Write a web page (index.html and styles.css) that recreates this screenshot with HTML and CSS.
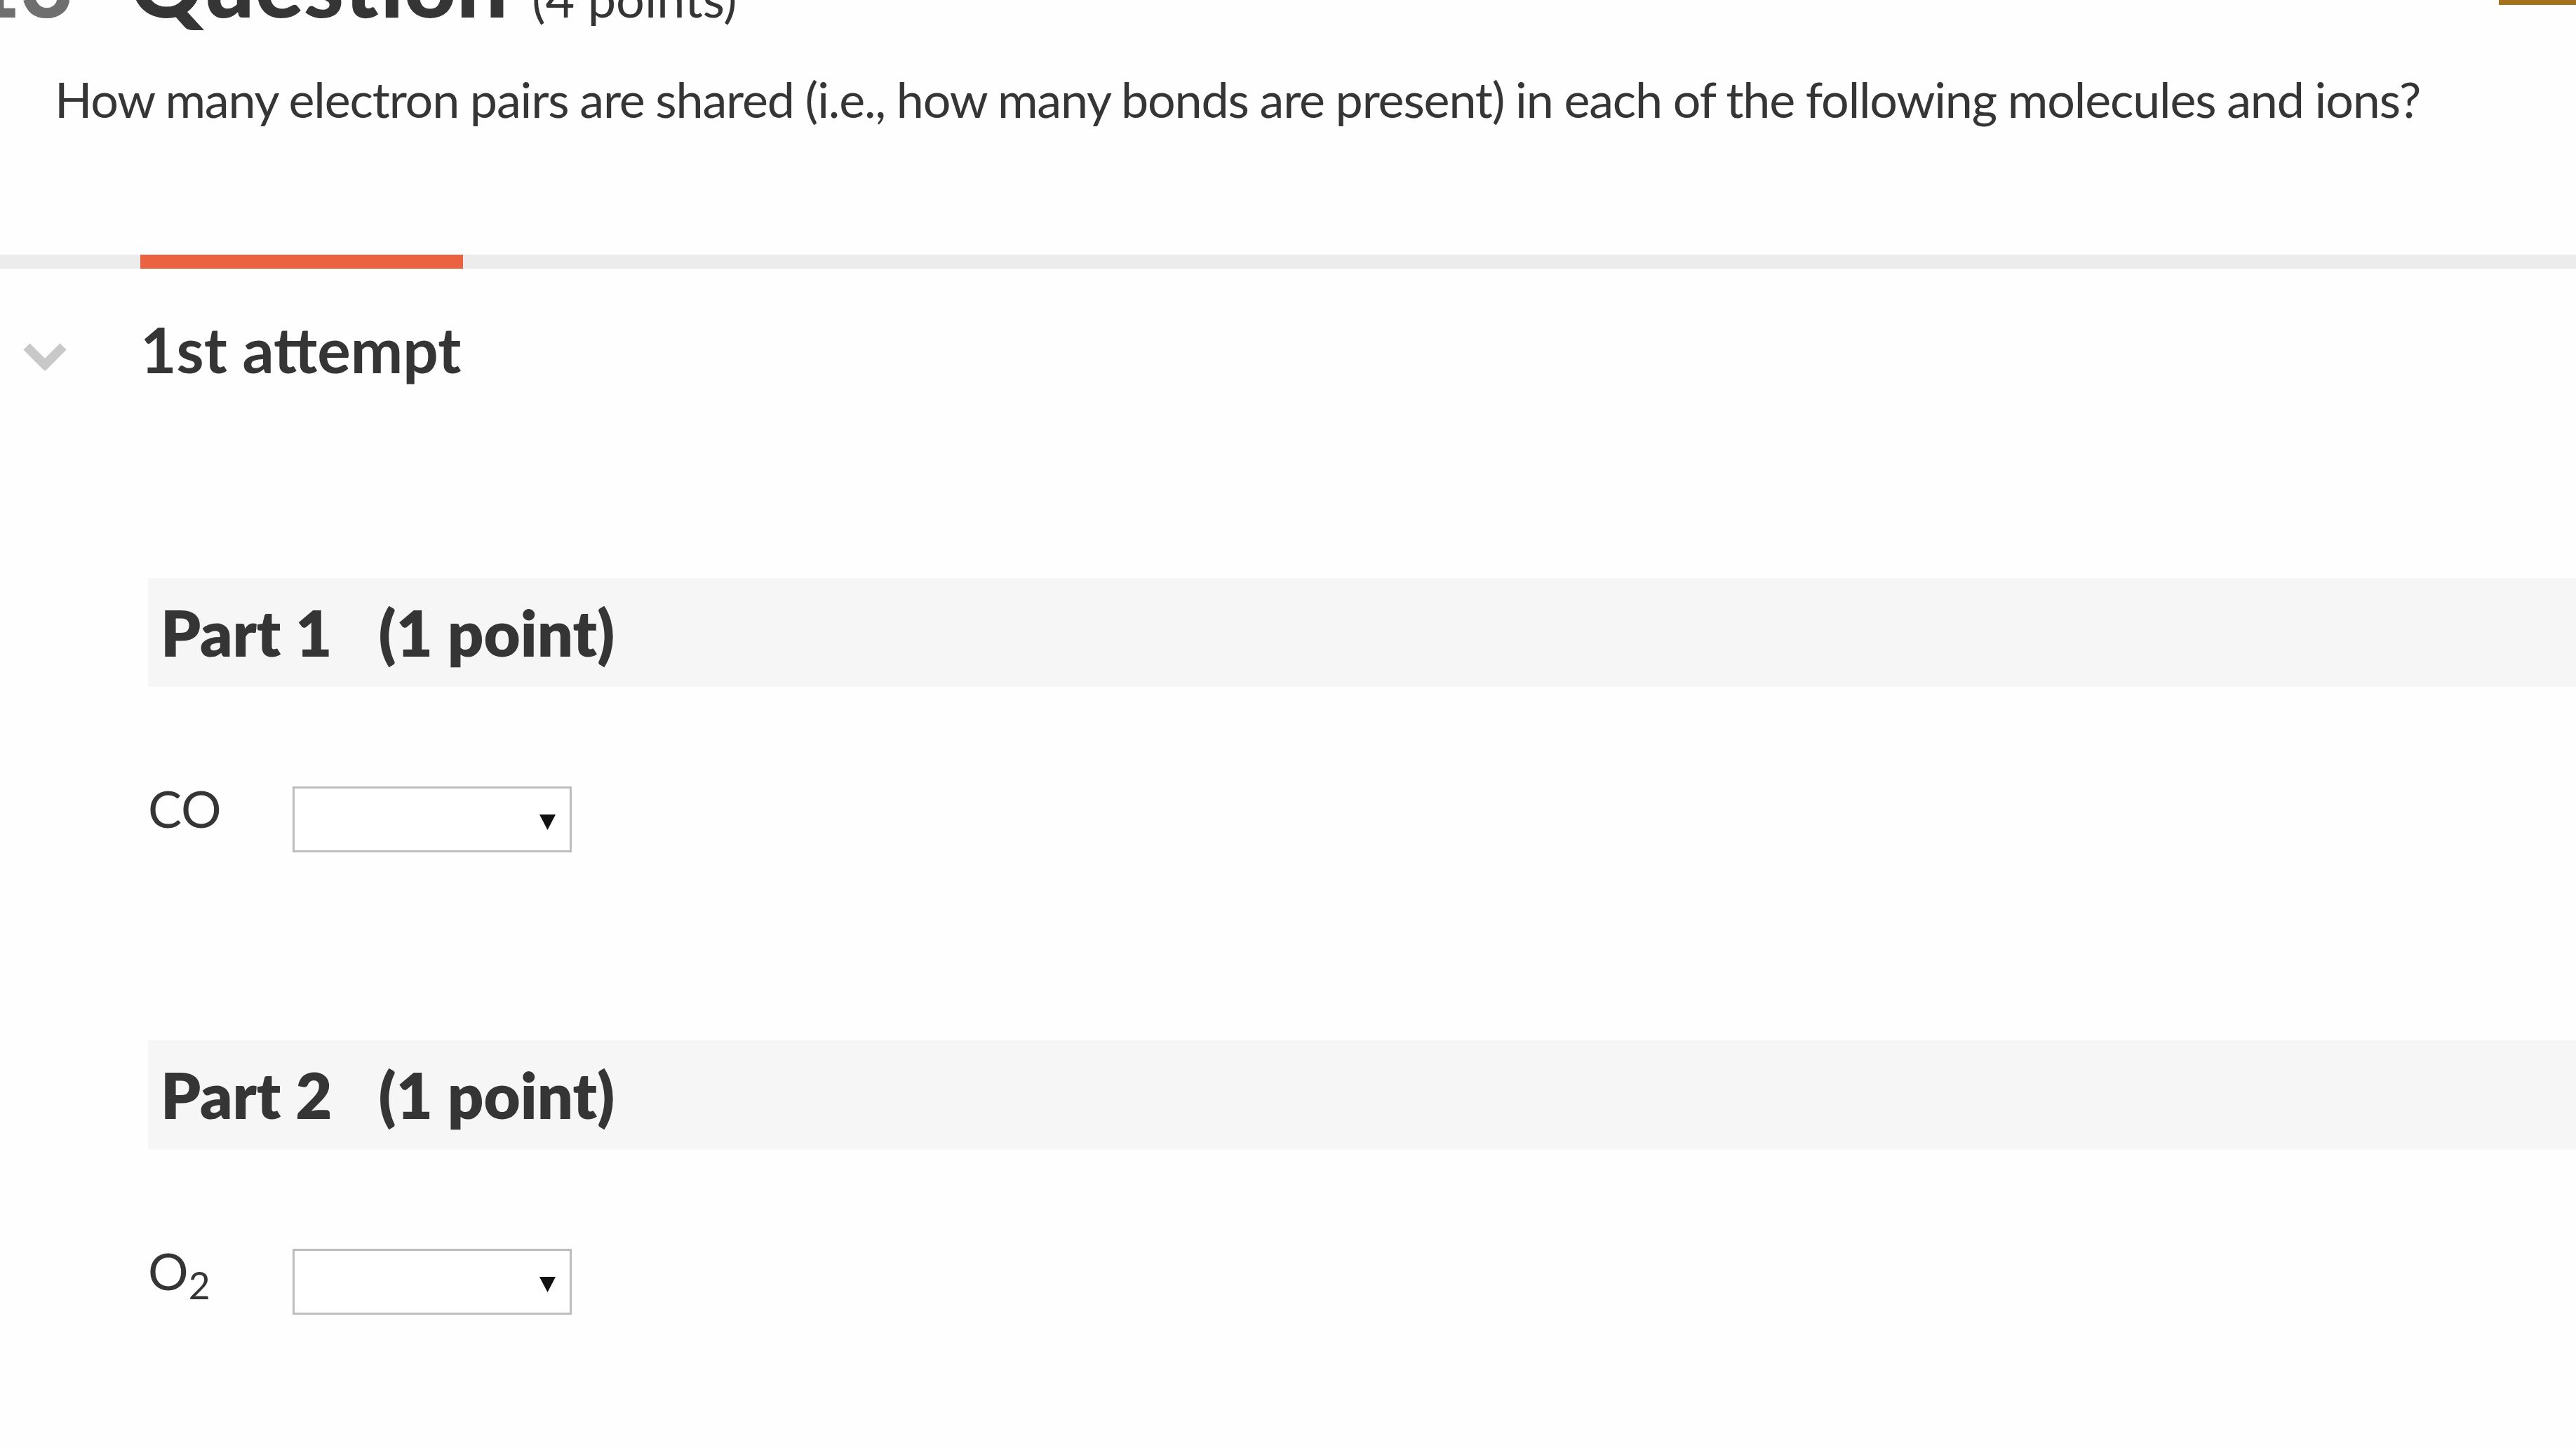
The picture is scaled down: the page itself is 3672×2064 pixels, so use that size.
FILE: index.html
```html
<!DOCTYPE html>
<html lang="en">
<head>
<meta charset="utf-8">
<title>Question 13</title>
<link rel="stylesheet" href="styles.css">
</head>
<body>
<header class="qhead">
  <h1 class="qtitle"><span class="qnum">13</span><span class="qword">Question</span><span class="qpts">(4 points)</span></h1>
  <div class="edge-btn"></div>
</header>
<p class="prompt">How many electron pairs are shared (i.e., how many bonds are present) in each of the following molecules and ions?</p>
<div class="track"><div class="track-fill"></div></div>
<div class="attempt">
  <svg class="chev" width="62" height="40" viewBox="0 0 62 40"><polyline points="5,6 31,32 57,6" fill="none" stroke="#c8c8c8" stroke-width="13" stroke-linejoin="miter"/></svg>
  <h2 class="attempt-title">1st attempt</h2>
</div>
<section class="parts">
  <div class="part-head"><h3>Part 1<span class="pt">(1 point)</span></h3></div>
  <div class="answer">
    <span class="label">CO</span>
    <div class="select"><svg width="27" height="25" viewBox="0 0 27 25"><polygon points="2,2 25,2 13.5,24" fill="#111"/></svg></div>
  </div>
  <div class="part-head second"><h3>Part 2<span class="pt">(1 point)</span></h3></div>
  <div class="answer">
    <span class="label">O<sub>2</sub></span>
    <div class="select"><svg width="27" height="25" viewBox="0 0 27 25"><polygon points="2,2 25,2 13.5,24" fill="#111"/></svg></div>
  </div>
</section>
</body>
</html>
```

FILE: styles.css
```css
html, body {
  margin: 0;
  padding: 0;
  background: #fefefe;
  color: #353535;
  font-family: Lato, "Open Sans", "Liberation Sans", sans-serif;
  overflow: hidden;
}

.qhead {
  display: flex;
  justify-content: space-between;
  align-items: flex-start;
  margin-top: -90px;
}

.qtitle {
  margin: 0 0 0 -46px;
  font-size: 130px;
  line-height: 1;
  font-weight: 900;
  white-space: nowrap;
}

.qnum {
  color: #6f6f6f;
  margin-right: 80px;
}

.qword {
  color: #353535;
}

.qpts {
  font-size: 72px;
  font-weight: 400;
  margin-left: 34px;
}

.edge-btn {
  width: 110px;
  height: 7px;
  margin-top: 90px;
  background: #a5711d;
}

.prompt {
  margin: 52px 0 0 78px;
  font-size: 70px;
  line-height: 98px;
  letter-spacing: -1.15px;
  word-spacing: -1px;
}

.track {
  margin-top: 173px;
  height: 20px;
  background: #ececec;
}

.track-fill {
  margin-left: 200px;
  width: 460px;
  height: 20px;
  background: #ea6240;
}

.attempt {
  display: flex;
  align-items: flex-start;
  margin-top: 61px;
  padding-left: 33px;
}

.chev {
  display: block;
  margin-top: 44px;
}

.attempt-title {
  margin: 0 0 0 105px;
  font-size: 89px;
  font-weight: 700;
  line-height: 107px;
}

.parts {
  margin-left: 211px;
  margin-top: 273px;
}

.part-head {
  display: flex;
  align-items: center;
  height: 155px;
  background: #f6f6f6;
  padding-left: 18px;
}

.part-head.second {
  margin-top: 268px;
}

.part-head h3 {
  margin: 0;
  font-size: 90px;
  font-weight: 800;
  line-height: 107px;
}

.pt {
  margin-left: 66px;
}

.answer {
  display: flex;
  align-items: flex-start;
  margin-top: 131px;
}

.label {
  width: 206px;
  font-size: 72px;
  line-height: 84px;
}

.label sub {
  font-size: 0.74em;
  line-height: 0;
  vertical-align: -13px;
}

.select {
  box-sizing: border-box;
  width: 398px;
  height: 94px;
  margin-top: 11px;
  border: 3px solid #bdbdbd;
  background: #fff;
  display: flex;
  align-items: center;
  justify-content: flex-end;
  padding-right: 18px;
}

.select svg {
  display: block;
  margin-top: 6px;
}
```
